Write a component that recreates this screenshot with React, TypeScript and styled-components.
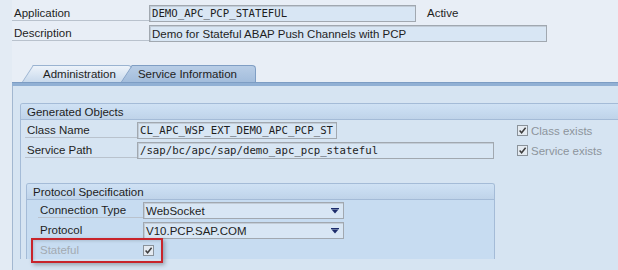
import React from 'react';
import styled, { createGlobalStyle } from 'styled-components';

const GlobalStyle = createGlobalStyle`
  html, body {
    margin: 0;
    padding: 0;
  }
  body {
    background: #e8eef6;
    font-family: "Liberation Sans", Arial, sans-serif;
    font-size: 11.5px;
    color: #1e1e1e;
  }
`;

const Screen = styled.div`
  position: relative;
  display: flex;
  width: 618px;
  height: 270px;
  overflow: hidden;
`;

const Gutter = styled.div`
  flex: 0 0 12px;
  background: #e3ebf4;
`;

const Main = styled.div`
  flex: 1;
  min-width: 0;
  display: flex;
  flex-direction: column;
  overflow: hidden;
`;

const Header = styled.div`
  display: flex;
  flex-direction: column;
  gap: 3px;
  padding-top: 5px;
`;

const Row = styled.div<{ $gapTop?: number }>`
  display: flex;
  align-items: flex-start;
  height: 17px;
  margin-top: ${({ $gapTop }) => $gapTop ?? 0}px;
`;

const Label = styled.div<{ $w: number; $muted?: boolean; $line?: boolean }>`
  box-sizing: border-box;
  width: ${({ $w }) => $w}px;
  height: 16px;
  padding-left: 2px;
  display: flex;
  align-items: center;
  white-space: nowrap;
  color: ${({ $muted }) => ($muted ? '#a3aab2' : '#1e1e1e')};
  border-bottom: 1px solid ${({ $line = true }) => ($line ? '#b9c2cd' : 'transparent')};
`;

const Field = styled.div<{ $w: number; $mono?: boolean }>`
  box-sizing: border-box;
  width: ${({ $w }) => $w}px;
  height: 17px;
  padding: 0 2px;
  display: flex;
  align-items: center;
  justify-content: space-between;
  background: #d8e6f4;
  border: 1px solid #a1a8b0;
  box-shadow: inset 1px 1px 0 #c2ccd7;
  white-space: nowrap;
  overflow: hidden;
  font-family: ${({ $mono }) =>
    $mono ? '"DejaVu Sans Mono", "Liberation Mono", monospace' : 'inherit'};
  font-size: ${({ $mono }) => ($mono ? '10.7px' : 'inherit')};
`;

const Status = styled.div`
  margin-left: 11px;
  height: 16px;
  display: flex;
  align-items: center;
`;

const TabStrip = styled.div`
  display: flex;
  height: 17px;
  margin-top: 23px;
  padding-left: 10px;
  position: relative;
  z-index: 1;
`;

const Tab = styled.div<{ $active?: boolean }>`
  position: relative;
  height: 17px;
  display: flex;
  align-items: center;
  white-space: nowrap;
  padding: ${({ $active }) => ($active ? '0 19px 0 17px' : '0 16px 0 21px')};
  margin-left: ${({ $active }) => ($active ? '-11px' : '0')};
  z-index: ${({ $active }) => ($active ? 2 : 1)};

  &::before,
  &::after {
    content: '';
    position: absolute;
    top: 0;
    bottom: 0;
    z-index: -1;
    box-sizing: border-box;
    background: ${({ $active }) =>
      $active ? 'linear-gradient(#b8cde6, #a3bddc)' : 'linear-gradient(#edf3fa, #c8d9ec)'};
    border: 1px solid ${({ $active }) => ($active ? '#7f9ec4' : '#9ab3d1')};
    border-bottom: none;
  }
  &::before {
    left: 0;
    width: 26px;
    border-right: none;
    transform-origin: 0 100%;
    transform: skewX(-33deg);
  }
  &::after {
    left: 14px;
    right: 0;
    border-left: none;
    border-radius: 0 4px 0 0;
  }
`;

const Band = styled.div`
  height: 3px;
  background: #91b0d4;
  border-top: 1px solid #7d9dc4;
`;

const Panel = styled.div`
  flex: 1;
  background: #d6e4f2;
  border-left: 1px solid #a2b7d0;
  padding: 17px 0 0 7px;
`;

const Group = styled.section<{ $w: number; $filled?: boolean; $offset?: number }>`
  box-sizing: border-box;
  width: ${({ $w }) => $w}px;
  margin-left: ${({ $offset }) => $offset ?? 0}px;
  border: 1px solid #a4bbd7;
  border-bottom: none;
  border-radius: 3px 3px 0 0;
  background: ${({ $filled }) => ($filled ? '#c7dcf1' : 'transparent')};
`;

const GroupHeader = styled.div`
  height: 15px;
  padding-left: 6px;
  display: flex;
  align-items: center;
  background: linear-gradient(#cfe1f4 0%, #c6daef 55%, #bfd3e9 100%);
  border-bottom: 1px solid #a4bbd7;
  border-radius: 2px 2px 0 0;
`;

const GroupBody = styled.div<{ $indent: number }>`
  display: flex;
  flex-direction: column;
  gap: 3px;
  padding: 2px 0 0 ${({ $indent }) => $indent}px;
`;

const FieldSlot = styled.div`
  width: 357px;
`;

const CheckItem = styled.div<{ $shift?: number }>`
  display: flex;
  align-items: center;
  gap: 3px;
  height: 17px;
  margin-left: ${({ $shift }) => $shift ?? 0}px;
  color: #8d949c;
  white-space: nowrap;
`;

const Box = styled.span`
  box-sizing: border-box;
  width: 11px;
  height: 11px;
  display: inline-flex;
  align-items: center;
  justify-content: center;
  background: #e4eaf1;
  border: 1px solid #8a929a;
`;

const Highlight = styled.div`
  position: absolute;
  left: 31px;
  top: 238px;
  width: 132px;
  height: 25px;
  box-sizing: border-box;
  border: 2px solid #c8242b;
  box-shadow: 2px 2px 4px rgba(40, 50, 60, 0.35), inset 1px 1px 3px rgba(40, 50, 60, 0.18);
  pointer-events: none;
`;

const Check = () => (
  <Box>
    <svg width="9" height="9" viewBox="0 0 9 9">
      <path d="M1.6 4.6 L3.6 6.8 L7.6 1.8" fill="none" stroke="#3d3d3d" strokeWidth="1.5" />
    </svg>
  </Box>
);

const Arrow = () => (
  <svg width="8" height="6" viewBox="0 0 8 6" style={{ marginRight: 2 }}>
    <rect x="0" y="0" width="8" height="1.2" fill="#1d2c6b" />
    <path d="M0.5 1.5 L7.5 1.5 L4 5.5 Z" fill="#1d2c6b" />
  </svg>
);

const App = () => {
  return (
    <>
      <GlobalStyle />
      <Screen>
        <Gutter />
        <Main>
          <Header>
            <Row>
              <Label $w={137}>Application</Label>
              <Field $w={267} $mono>DEMO_APC_PCP_STATEFUL</Field>
              <Status>Active</Status>
            </Row>
            <Row>
              <Label $w={137}>Description</Label>
              <Field $w={398}>Demo for Stateful ABAP Push Channels with PCP</Field>
            </Row>
          </Header>

          <TabStrip>
            <Tab>Administration</Tab>
            <Tab $active>Service Information</Tab>
          </TabStrip>
          <Band />

          <Panel>
            <Group $w={620}>
              <GroupHeader>Generated Objects</GroupHeader>
              <GroupBody $indent={4}>
                <Row>
                  <Label $w={112}>Class Name</Label>
                  <FieldSlot>
                    <Field $w={200} $mono>CL_APC_WSP_EXT_DEMO_APC_PCP_ST</Field>
                  </FieldSlot>
                  <CheckItem $shift={23}>
                    <Check />
                    Class exists
                  </CheckItem>
                </Row>
                <Row>
                  <Label $w={112}>Service Path</Label>
                  <FieldSlot>
                    <Field $w={357} $mono>/sap/bc/apc/sap/demo_apc_pcp_stateful</Field>
                  </FieldSlot>
                  <CheckItem $shift={23}>
                    <Check />
                    Service exists
                  </CheckItem>
                </Row>

                <Group $w={469} $filled $offset={1} style={{ marginTop: 21 }}>
                  <GroupHeader>Protocol Specification</GroupHeader>
                  <GroupBody $indent={11}>
                    <Row>
                      <Label $w={105}>Connection Type</Label>
                      <Field $w={201}>
                        WebSocket
                        <Arrow />
                      </Field>
                    </Row>
                    <Row>
                      <Label $w={105} $line={false}>Protocol</Label>
                      <Field $w={201}>
                        V10.PCP.SAP.COM
                        <Arrow />
                      </Field>
                    </Row>
                    <Row>
                      <Label $w={105} $muted $line={false}>Stateful</Label>
                      <CheckItem>
                        <Check />
                      </CheckItem>
                    </Row>
                  </GroupBody>
                </Group>
              </GroupBody>
            </Group>
          </Panel>
        </Main>
        <Highlight />
      </Screen>
    </>
  );
};

export default App;
